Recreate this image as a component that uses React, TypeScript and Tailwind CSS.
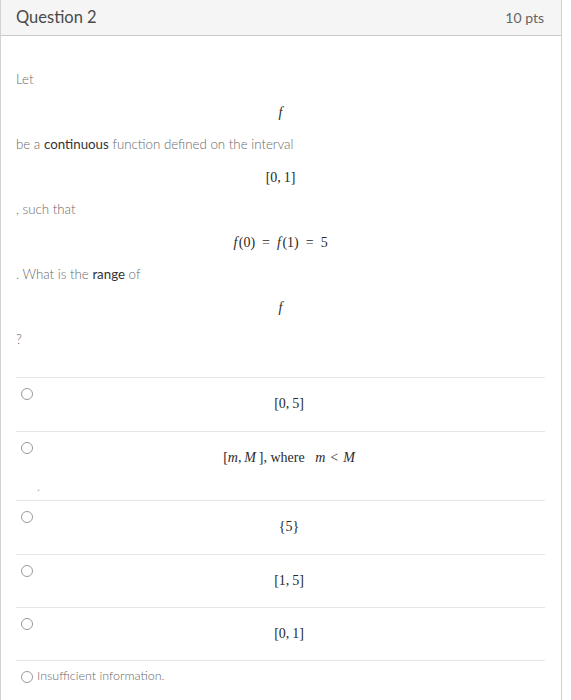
import React from "react";

const serif = "font-['Liberation_Serif','Times_New_Roman',serif] text-[14px] text-[#2a2a2a] leading-[20px]";

function Radio() {
  return <span className="block w-[12px] h-[12px] rounded-full border border-[#9a9a9a] bg-white shrink-0" />;
}

function TextLine({ children }: { children: React.ReactNode }) {
  return <div className="h-[32.5px] flex items-center text-[13.3px] font-light text-[#6a6a6a]">{children}</div>;
}

function MathLine({ children }: { children: React.ReactNode }) {
  return <div className={`h-[32.5px] flex items-center justify-center ${serif}`}>{children}</div>;
}

function AnswerRow({ children, h, extra }: { children: React.ReactNode; h: string; extra?: React.ReactNode }) {
  return (
    <div className={`border-t border-[#e6e6e6] flex ${h}`}>
      <div className="ml-[5px] mt-[10px]">
        <Radio />
      </div>
      <div className="flex-1 pt-[16px]">
        <div className={`text-center ${serif}`}>{children}</div>
        {extra}
      </div>
    </div>
  );
}

function F() {
  return <i className="mr-[1.5px]">f</i>;
}

export default function App() {
  return (
    <div className="w-[571px] h-[700px] bg-white overflow-hidden font-['Lato','Liberation_Sans',sans-serif]">
      <div className="w-[562px] h-full border-l border-r border-[#d2d2d2]">
        <div className="h-[36px] bg-[#f5f5f5] border-b border-[#c9c9c9] flex items-center justify-between pl-[15px] pr-[17px]">
          <span className="text-[16.5px] text-[#4a4a4a]">Question 2</span>
          <span className="text-[14px] text-[#666]">10 pts</span>
        </div>
        <div className="pl-[15px] pr-[16px] pt-[28px]">
          <TextLine>Let</TextLine>
          <MathLine><i>f</i></MathLine>
          <TextLine>
            <span>
              be a <span className="font-normal text-[#333]">continuous</span> function defined on the interval
            </span>
          </TextLine>
          <MathLine>[0,&thinsp;1]</MathLine>
          <TextLine>, such that</TextLine>
          <MathLine>
            <F />(0)<span className="mx-[7px]">=</span><F />(1)<span className="mx-[7px]">=</span>5
          </MathLine>
          <TextLine>
            <span>
              . What is the <span className="font-normal text-[#333]">range</span> of
            </span>
          </TextLine>
          <MathLine><i>f</i></MathLine>
          <TextLine>?</TextLine>

          <div className="mt-[20.5px]">
            <AnswerRow h="h-[54px]">[0,&thinsp;5]</AnswerRow>
            <AnswerRow
              h="h-[69px]"
              extra={<div className="mt-[9px] pl-[4px] text-[12px] leading-[20px] text-[#aaa]">.</div>}
            >
              [<i>m</i>,&thinsp;<i>M</i>&thinsp;], where&nbsp;&nbsp;&nbsp;<i>m</i>
              <span className="mx-[5px]">&lt;</span>
              <i>M</i>
            </AnswerRow>
            <AnswerRow h="h-[54px]">{"{5}"}</AnswerRow>
            <AnswerRow h="h-[53px]">[1,&thinsp;5]</AnswerRow>
            <AnswerRow h="h-[53px]">[0,&thinsp;1]</AnswerRow>
            <div className="border-t border-[#e6e6e6] flex items-center h-[32px]">
              <div className="ml-[5px]">
                <Radio />
              </div>
              <span className="ml-[4px] text-[12.5px] font-light text-[#6a6a6a]">Insufficient information.</span>
            </div>
          </div>
        </div>
      </div>
    </div>
  );
}
